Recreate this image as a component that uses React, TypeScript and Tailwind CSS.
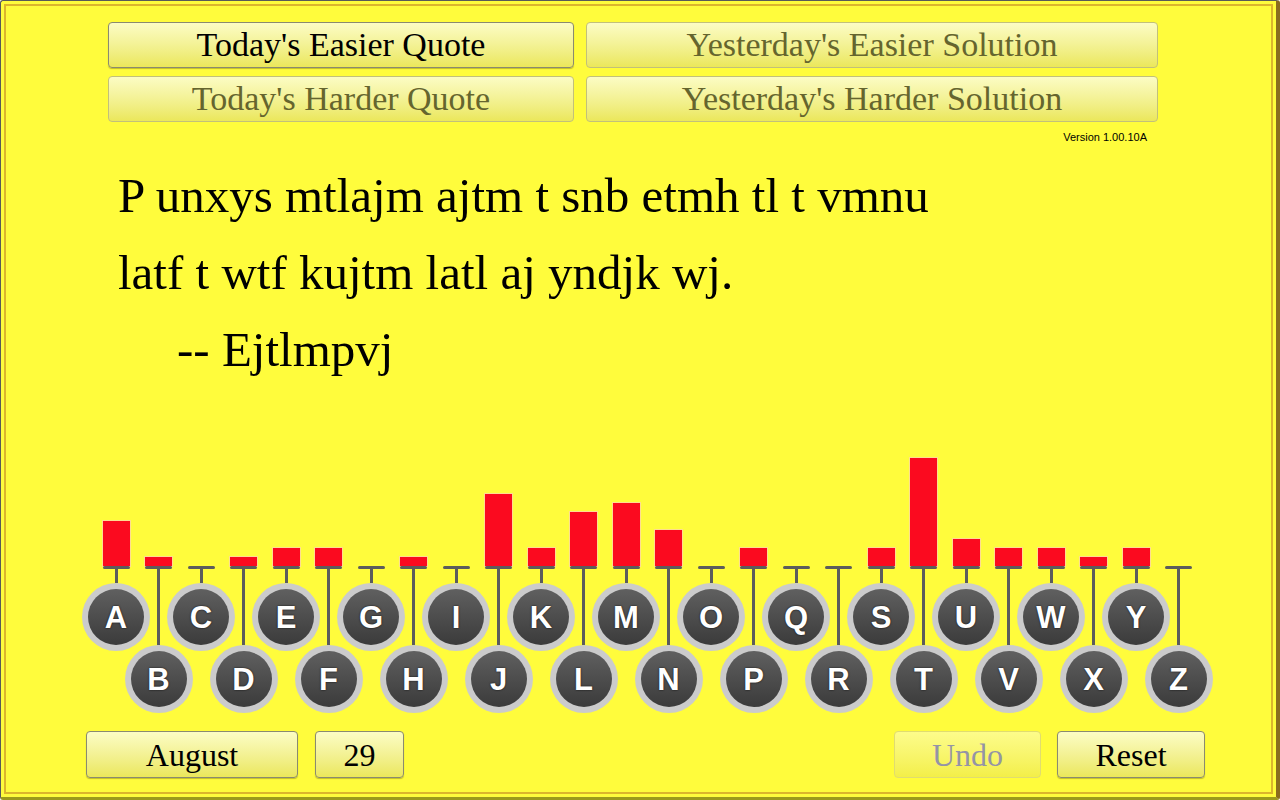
import React from "react"

const serif = { fontFamily: '"Liberation Serif", "Times New Roman", serif' }
const sans = { fontFamily: '"Liberation Sans", Arial, sans-serif' }

// frequency of each cipher letter, in 9px units
const counts = [5, 1, 0, 1, 2, 2, 0, 1, 0, 8, 2, 6, 7, 4, 0, 2, 0, 0, 2, 12, 3, 2, 2, 1, 2, 0]
const letters = "ABCDEFGHIJKLMNOPQRSTUVWXYZ".split("")

function TopButton({ label, active, className }: { label: string; active?: boolean; className?: string }) {
  return (
    <button
      style={serif}
      className={
        "h-[46px] rounded-[4px] border bg-gradient-to-b from-[#fcfcc4] to-[#ebe75a] leading-none " +
        (active
          ? "border-[#8a8a70] text-black shadow-[0_1px_1px_rgba(0,0,0,0.25)]"
          : "border-[#c2c07a] text-[#65652e]") +
        " " +
        (className ?? "text-[34px]")
      }
    >
      {label}
    </button>
  )
}

function Key({ letter, count, low }: { letter: string; count: number; low: boolean }) {
  return (
    <div className="flex w-[42.5px] flex-col items-center">
      <div className="flex h-[120px] items-end">
        {count > 0 && (
          <div
            className="w-[27px] bg-[#fb0a1f] shadow-[0_0_0_1px_rgba(255,200,200,0.6)]"
            style={{ height: count * 9 }}
          />
        )}
      </div>
      <div className="h-[3px] w-[27px] rounded-full bg-[#5c5c5c]" />
      <div className={"w-[3px] bg-[#5c5c5c] " + (low ? "h-[76px]" : "h-[14px]")} />
      <div className="relative -mx-[13px] flex h-[68px] w-[68px] shrink-0 items-center justify-center rounded-full bg-[#cbcbcb]">
        <div
          style={sans}
          className="flex h-[56px] w-[56px] items-center justify-center rounded-full bg-gradient-to-b from-[#606060] to-[#3b3b3b] text-[31px] font-bold leading-none text-white [text-shadow:0_0_2px_rgba(0,0,0,0.9)]"
        >
          {letter}
        </div>
      </div>
    </div>
  )
}

export default function App() {
  return (
    <div className="h-[800px] w-[1280px] overflow-hidden rounded-[3px] border-l border-t border-b-[3px] border-r-4 border-l-[#5a5a5a] border-t-[#5a5a5a] border-b-[#9c9a1c] border-r-[#8a6c1e] bg-[#fffc3c] p-[3px]">
      <div className="flex h-full flex-col border-2 border-[#dcb52c]">
        {/* Quote selection */}
        <div className="ml-[102px] mt-[16px] grid grid-cols-[466px_572px] gap-x-[12px] gap-y-[8px]">
          <TopButton label="Today's Easier Quote" active />
          <TopButton label="Yesterday's Easier Solution" />
          <TopButton label="Today's Harder Quote" />
          <TopButton label="Yesterday's Harder Solution" />
        </div>

        <div style={sans} className="mt-[9px] flex justify-end pr-[124px] text-[11px] leading-[12px] text-black">
          Version 1.00.10A
        </div>

        {/* Cipher text */}
        <div style={serif} className="ml-[112px] mt-[14px] text-[49px] leading-[77px] text-black">
          <div>P unxys mtlajm ajtm t snb etmh tl t vmnu</div>
          <div>latf t wtf kujtm latl aj yndjk wj.</div>
          <div className="pl-[59px]">-- Ejtlmpvj</div>
        </div>

        {/* Letter keys with frequency bars */}
        <div className="ml-[88.75px] mt-[58px] flex items-start">
          {letters.map((l, i) => (
            <Key key={l} letter={l} count={counts[i]} low={i % 2 === 1} />
          ))}
        </div>

        {/* Date and controls */}
        <div className="ml-[80px] mt-[18px] flex items-center pr-[66px]">
          <TopButton label="August" active className="h-[47px] w-[212px] text-[32px]" />
          <TopButton label="29" active className="ml-[17px] h-[47px] w-[89px] text-[32px]" />
          <button
            style={serif}
            className="ml-auto h-[47px] w-[147px] rounded-[4px] border border-[#e0dc70] bg-gradient-to-b from-[#fdfc8a] to-[#f3ef48] text-[32px] leading-none text-[#9494a6]"
          >
            Undo
          </button>
          <TopButton label="Reset" active className="ml-[16px] h-[47px] w-[148px] text-[32px]" />
        </div>
      </div>
    </div>
  )
}
